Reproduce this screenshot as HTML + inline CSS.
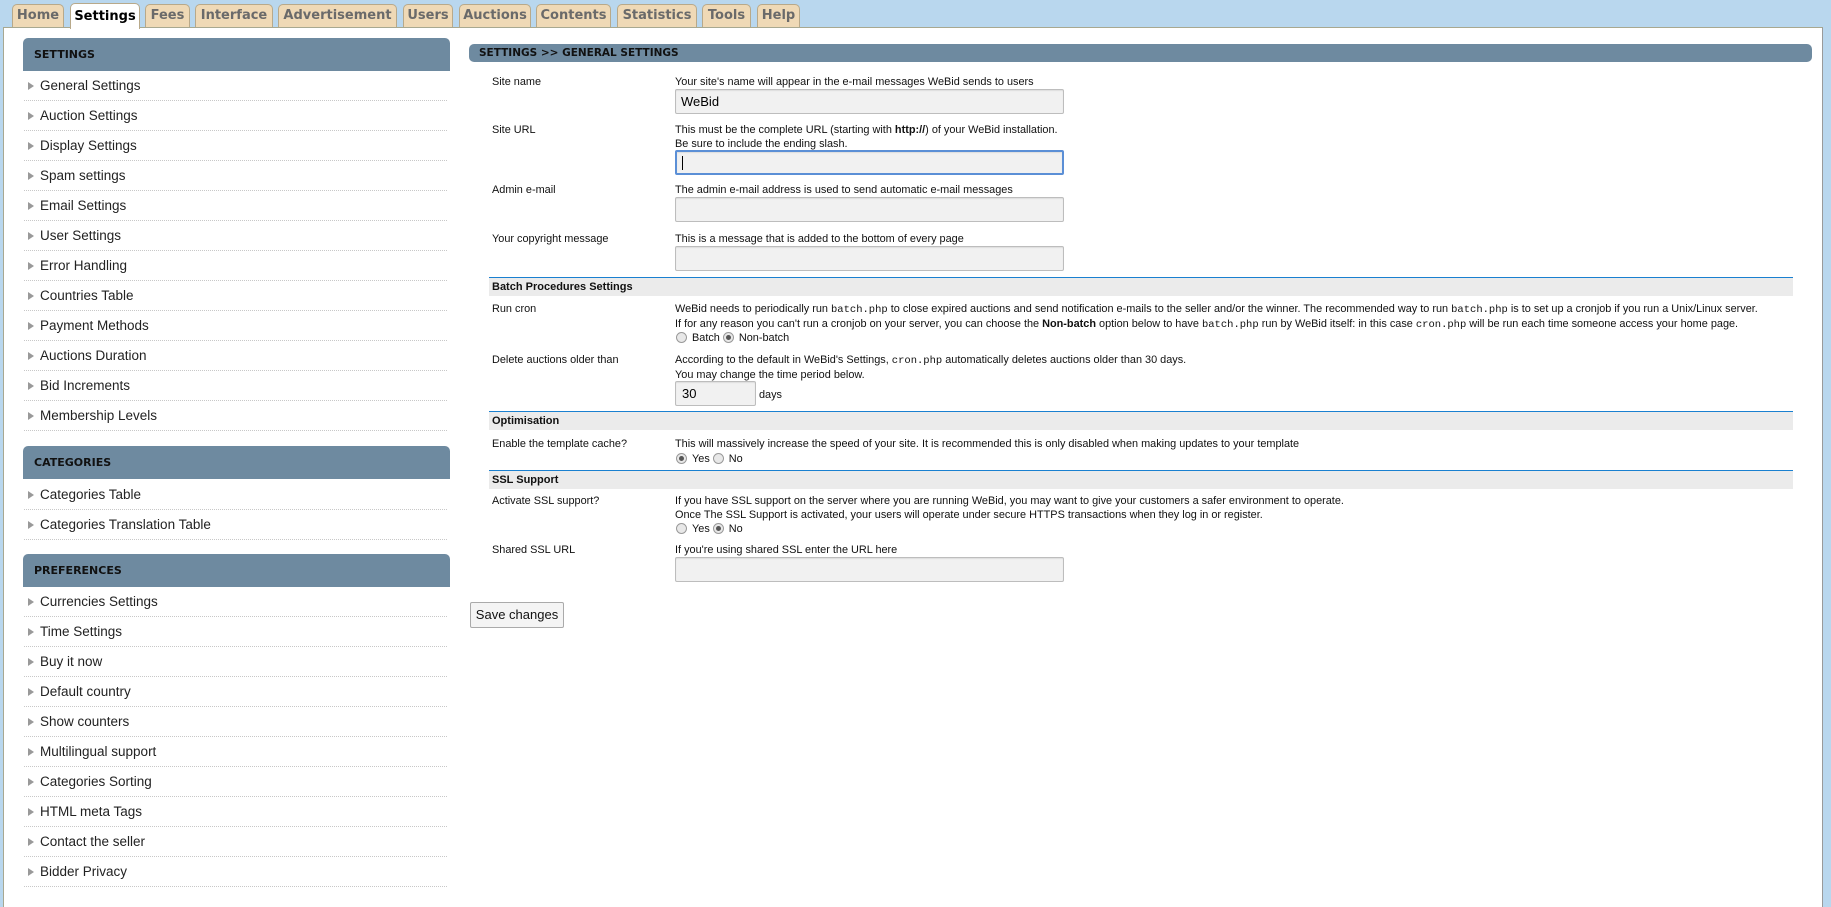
<!DOCTYPE html>
<html><head><meta charset="utf-8"><style>
*{margin:0;padding:0;box-sizing:border-box}
body{width:1831px;height:894px;overflow:hidden;background:#b9d7ee;font-family:"Liberation Sans","DejaVu Sans",sans-serif;position:relative}
.a{position:absolute;white-space:nowrap}
.tab{position:absolute;top:4px;height:24px;background:#efd9b6;border:1px solid #b8a98a;border-bottom:none;border-radius:5px 5px 0 0;font:bold 13px "DejaVu Sans",sans-serif;color:#6a6a6a;text-align:center;line-height:22px}
.tab.on{background:#fff;color:#000;top:3px;height:26px;line-height:26px;z-index:2}
#main{position:absolute;left:3px;top:27px;width:1820px;height:880px;background:#fff;border-left:1px solid #a8a890;border-top:1px solid #a8a890;border-right:1px solid #9a9a9a}
.hd{position:absolute;left:23px;width:427px;background:#6e8aa0;border-radius:5px 5px 0 0;font:bold 11px "DejaVu Sans",sans-serif;color:#111;padding-left:11px}
.it{position:absolute;left:24px;width:423px;height:30px;border-bottom:1px dotted #c8c8c8;font-size:13.5px;color:#222;padding-left:16px;line-height:30px}
.it:before{content:"";position:absolute;left:4px;top:11px;border-left:6px solid #999;border-top:4px solid transparent;border-bottom:4px solid transparent}
.t{position:absolute;font-size:10.9px;color:#111;white-space:nowrap;line-height:14px}
.inp{position:absolute;left:675px;width:389px;height:25px;background:#f1f1f1;border:1px solid #bdbdbd;border-radius:2px;box-shadow:inset 0 1px 1px #ddd}
.sec{position:absolute;left:489px;width:1304px;height:19px;background:#ebebeb;border-top:1px solid #1a80d0;font:bold 11px "Liberation Sans",sans-serif;padding:3px 0 0 3px;color:#111}
.r{display:inline-block;width:11px;height:11px;border:1px solid #999;border-radius:50%;background:#e8e8e8;vertical-align:-2px;margin-right:5px;position:relative}
.r.c:after{content:"";position:absolute;left:2px;top:2px;width:5px;height:5px;border-radius:50%;background:#555}
code{font-family:"Liberation Mono",monospace;font-size:10.5px}
</style></head><body>
<div class="tab" style="left:12px;width:52px">Home</div>
<div class="tab on" style="left:70px;width:70px">Settings</div>
<div class="tab" style="left:145px;width:45px">Fees</div>
<div class="tab" style="left:195px;width:78px">Interface</div>
<div class="tab" style="left:278px;width:119px">Advertisement</div>
<div class="tab" style="left:403px;width:50px">Users</div>
<div class="tab" style="left:459px;width:72px">Auctions</div>
<div class="tab" style="left:536px;width:75px">Contents</div>
<div class="tab" style="left:617px;width:80px">Statistics</div>
<div class="tab" style="left:702px;width:49px">Tools</div>
<div class="tab" style="left:757px;width:43px">Help</div>
<div id="main"></div>

<div class="hd" style="top:38px;height:33px;line-height:33px">SETTINGS</div>
<div class="it" style="top:71px">General Settings</div>
<div class="it" style="top:101px">Auction Settings</div>
<div class="it" style="top:131px">Display Settings</div>
<div class="it" style="top:161px">Spam settings</div>
<div class="it" style="top:191px">Email Settings</div>
<div class="it" style="top:221px">User Settings</div>
<div class="it" style="top:251px">Error Handling</div>
<div class="it" style="top:281px">Countries Table</div>
<div class="it" style="top:311px">Payment Methods</div>
<div class="it" style="top:341px">Auctions Duration</div>
<div class="it" style="top:371px">Bid Increments</div>
<div class="it" style="top:401px">Membership Levels</div>

<div class="hd" style="top:446px;height:33px;line-height:33px">CATEGORIES</div>
<div class="it" style="top:480px">Categories Table</div>
<div class="it" style="top:510px">Categories Translation Table</div>

<div class="hd" style="top:554px;height:33px;line-height:33px">PREFERENCES</div>
<div class="it" style="top:587px">Currencies Settings</div>
<div class="it" style="top:617px">Time Settings</div>
<div class="it" style="top:647px">Buy it now</div>
<div class="it" style="top:677px">Default country</div>
<div class="it" style="top:707px">Show counters</div>
<div class="it" style="top:737px">Multilingual support</div>
<div class="it" style="top:767px">Categories Sorting</div>
<div class="it" style="top:797px">HTML meta Tags</div>
<div class="it" style="top:827px">Contact the seller</div>
<div class="it" style="top:857px">Bidder Privacy</div>

<div class="a" style="left:469px;top:44px;width:1343px;height:18px;background:#6e8aa0;border-radius:5px;font:bold 10.5px 'DejaVu Sans',sans-serif;color:#111;padding-left:10px;line-height:18px">SETTINGS &gt;&gt; GENERAL SETTINGS</div>

<div class="t" style="left:492px;top:75px">Site name</div>
<div class="t" style="left:675px;top:75px">Your site's name will appear in the e-mail messages WeBid sends to users</div>
<div class="inp" style="top:89px;font-size:13px;padding:4px 0 0 5px">WeBid</div>

<div class="t" style="left:492px;top:123px">Site URL</div>
<div class="t" style="left:675px;top:123px">This must be the complete URL (starting with <b>http://</b>) of your WeBid installation.<br>Be sure to include the ending slash.</div>
<div class="inp" style="top:150px;border:2px solid #5b8fd6"><div style="position:absolute;left:5px;top:4px;width:1px;height:14px;background:#000"></div></div>

<div class="t" style="left:492px;top:183px">Admin e-mail</div>
<div class="t" style="left:675px;top:183px">The admin e-mail address is used to send automatic e-mail messages</div>
<div class="inp" style="top:197px"></div>

<div class="t" style="left:492px;top:232px">Your copyright message</div>
<div class="t" style="left:675px;top:232px">This is a message that is added to the bottom of every page</div>
<div class="inp" style="top:246px"></div>

<div class="sec" style="top:277px">Batch Procedures Settings</div>
<div class="t" style="left:492px;top:302px">Run cron</div>
<div class="t" style="left:675px;top:302px">WeBid needs to periodically run <code>batch.php</code> to close expired auctions and send notification e-mails to the seller and/or the winner. The recommended way to run <code>batch.php</code> is to set up a cronjob if you run a Unix/Linux server.<br>If for any reason you can't run a cronjob on your server, you can choose the <b>Non-batch</b> option below to have <code>batch.php</code> run by WeBid itself: in this case <code>cron.php</code> will be run each time someone access your home page.</div>
<div class="t" style="left:676px;top:331px"><span class="r"></span>Batch <span class="r c"></span>Non-batch</div>

<div class="t" style="left:492px;top:353px">Delete auctions older than</div>
<div class="t" style="left:675px;top:353px">According to the default in WeBid's Settings, <code>cron.php</code> automatically deletes auctions older than 30 days.<br>You may change the time period below.</div>
<div class="inp" style="top:381px;width:81px;font-size:13px;padding:4px 0 0 6px">30</div>
<div class="t" style="left:759px;top:388px">days</div>

<div class="sec" style="top:411px">Optimisation</div>
<div class="t" style="left:492px;top:437px">Enable the template cache?</div>
<div class="t" style="left:675px;top:437px">This will massively increase the speed of your site. It is recommended this is only disabled when making updates to your template</div>
<div class="t" style="left:676px;top:452px"><span class="r c"></span>Yes <span class="r"></span>No</div>

<div class="sec" style="top:470px">SSL Support</div>
<div class="t" style="left:492px;top:494px">Activate SSL support?</div>
<div class="t" style="left:675px;top:494px">If you have SSL support on the server where you are running WeBid, you may want to give your customers a safer environment to operate.<br>Once The SSL Support is activated, your users will operate under secure HTTPS transactions when they log in or register.</div>
<div class="t" style="left:676px;top:522px"><span class="r"></span>Yes <span class="r c"></span>No</div>

<div class="t" style="left:492px;top:543px">Shared SSL URL</div>
<div class="t" style="left:675px;top:543px">If you're using shared SSL enter the URL here</div>
<div class="inp" style="top:557px"></div>

<div class="a" style="left:470px;top:602px;width:94px;height:26px;background:#f4f4f4;border:1px solid #aaa;border-radius:2px;font-size:13px;color:#111;text-align:center;line-height:24px">Save changes</div>
</body></html>
